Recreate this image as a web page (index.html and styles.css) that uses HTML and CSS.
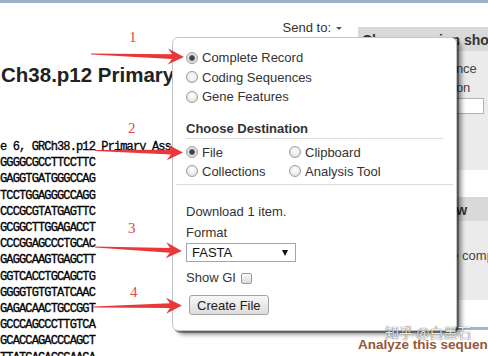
FILE: index.html
```html
<!DOCTYPE html>
<html lang="en">
<head>
<meta charset="utf-8">
<title>Nucleotide - Send to</title>
<link rel="stylesheet" href="styles.css">
</head>
<body>
<div class="topbar"></div>
<div class="page">
  <main class="content">
    <div class="toolbar"><span class="sendto">Send to:<span class="caret"></span></span></div>
    <h1 class="title">Ch38.p12 Primary Assembly</h1>
    <pre class="seq">e 6, GRCh38.p12 Primary Assembly
GGGGCGCCTTCCTTC
GAGGTGATGGGCCAG
TCCTGGAGGGCCAGG
CCCGCGTATGAGTTC
GCGGCTTGGAGACCT
CCCGGAGCCCTGCAC
GAGGCAAGTGAGCTT
GGTCACCTGCAGCTG
GGGGTGTGTATCAAC
GAGACAACTGCCGGT
GCCCAGCCCTTGTCA
GCACCAGACCCAGCT
TTATCACACCCAACA</pre>
  </main>
  <aside class="sidebar">
    <section class="portlet">
      <h2 class="portlet-head">Change region shown</h2>
      <div class="portlet-body region">
        <label class="opt"><input type="radio" class="radio" name="region" checked>Whole sequence</label>
        <label class="opt"><input type="radio" class="radio" name="region">Selected region</label>
        <div class="range">from:<input class="field" type="text"></div>
      </div>
    </section>
    <section class="portlet second">
      <h2 class="portlet-head">Customize view</h2>
      <div class="portlet-body custom">
        <label class="opt"><input type="checkbox" class="check">Show reverse complement</label>
      </div>
    </section>
    <section class="analyze">
      <h3 class="analyze-head">Analyze this sequence</h3>
    </section>
  </aside>
</div>

<div class="popup">
  <div class="pop-sec choices">
    <label class="row"><input type="radio" class="radio" name="rec" checked>Complete Record</label>
    <label class="row"><input type="radio" class="radio" name="rec">Coding Sequences</label>
    <label class="row"><input type="radio" class="radio" name="rec">Gene Features</label>
  </div>
  <div class="pop-sec dest">
    <h4 class="dest-head">Choose Destination</h4>
    <div class="dest-grid">
      <label class="row"><input type="radio" class="radio" name="dst" checked>File</label>
      <label class="row"><input type="radio" class="radio" name="dst">Clipboard</label>
      <label class="row"><input type="radio" class="radio" name="dst">Collections</label>
      <label class="row"><input type="radio" class="radio" name="dst">Analysis Tool</label>
    </div>
  </div>
  <div class="pop-sec file">
    <p class="line">Download 1 item.</p>
    <p class="line fmt">Format</p>
    <div class="select"><span>FASTA</span><span class="sel-arrow"></span></div>
    <label class="line gi">Show GI<input type="checkbox" class="check"></label>
    <button class="create" type="button">Create File</button>
  </div>
</div>

<svg class="annot" width="488" height="356" viewBox="0 0 488 356">
  <g class="arrow">
    <polygon transform="translate(91 54) rotate(1.85)" points="0,-0.6 81,-2.4 77,-8 93,0 77,8 81,2.4 0,0.6"/>
    <polygon transform="translate(95 150.5) rotate(1.3)" points="0,-0.6 76,-2.4 72,-8 88,0 72,8 76,2.4 0,0.6"/>
    <polygon transform="translate(95 247) rotate(2.63)" points="0,-0.6 75,-2.4 71,-8 87,0 71,8 75,2.4 0,0.6"/>
    <polygon transform="translate(93 307) rotate(-0.97)" points="0,-0.6 77,-2.4 73,-8 89,0 73,8 77,2.4 0,0.6"/>
  </g>
  <text class="num" x="129" y="42">1</text>
  <text class="num" x="128" y="133">2</text>
  <text class="num" x="128" y="233">3</text>
  <text class="num" x="130" y="297">4</text>
</svg>
<div class="watermark">知乎 @白墨石</div>
</body>
</html>
```
FILE: styles.css
```css
* { box-sizing: border-box; }
html, body { margin: 0; padding: 0; overflow: hidden; background: #fff; }
body {
  width: 488px;
  height: 356px;
  position: relative;
  font-family: "Liberation Sans", Arial, sans-serif;
  font-size: 13px;
  color: #333;
}

.topbar { height: 3px; background: #9db1c9; }

.page {
  display: grid;
  grid-template-columns: 358px 220px;
}

/* left content column */
.content { padding-top: 17px; min-width: 0; }
.toolbar {
  display: flex;
  justify-content: flex-end;
  padding-right: 16px;
  height: 15px;
  line-height: 15px;
}
.sendto { display: flex; align-items: center; gap: 5px; color: #333; }
.caret {
  width: 0; height: 0;
  border-left: 3px solid transparent;
  border-right: 3px solid transparent;
  border-top: 3px solid #555;
  margin-top: 2px;
}
.title {
  margin: 28px 0 0;
  padding-left: 1px;
  font-size: 20.5px;
  line-height: 24px;
  font-weight: bold;
  color: #222;
  white-space: nowrap;
}
.seq {
  margin: 52px 0 0;
  font-family: "Liberation Mono", "Courier New", monospace;
  font-size: 12px;
  letter-spacing: -0.87px;
  line-height: 16.2px;
  color: #000;
  -webkit-text-stroke: 0.3px #000;
  white-space: pre;
}

/* right sidebar */
.sidebar { padding-top: 24px; white-space: nowrap; }
.portlet-head {
  margin: 0;
  height: 24px;
  padding: 2px 0 0 4px;
  line-height: 22px;
  background: #d9d9d9;
  font-size: 14px;
  font-weight: bold;
  color: #333;
}
.portlet-body { background: #ebebeb; padding: 0 4px; color: #444; }
.region { height: 119px; padding-top: 7.5px; }
.second { margin-top: 27px; }
.custom { height: 79px; padding-top: 25px; }
.opt { display: flex; align-items: center; height: 19px; }
.opt .radio, .opt .check { margin-right: 6px; }
.range { display: flex; align-items: center; padding-left: 18px; margin-top: 1.5px; height: 16px; }
.field {
  width: 60px; height: 16px; margin: 0 0 0 14px; padding: 0;
  border: 1px solid #b3b3b3; background: #fff;
}
.analyze { margin-top: 27px; border-top: 3px solid #a3b6cd; padding-top: 7px; }
.analyze-head {
  margin: 0;
  font-size: 13.5px;
  line-height: 16px;
  font-weight: bold;
  color: #985735;
}

/* form controls */
.radio {
  -webkit-appearance: none;
  appearance: none;
  flex: none;
  width: 12px; height: 12px;
  margin: 0 4px 0 0;
  border-radius: 50%;
  border: 1px solid #9c9c9c;
  background: radial-gradient(circle at 50% 40%, #ffffff 0, #f0f0f0 45%, #d2d2d2 100%);
}
.radio:checked {
  background: radial-gradient(circle at 50% 50%, #333 0, #444 1.8px, #8c8c8c 2.8px, #e9e9e9 3.8px, #d4d4d4 100%);
}
.check {
  -webkit-appearance: none;
  appearance: none;
  flex: none;
  width: 11px; height: 11px;
  margin: 0;
  border: 1px solid #9a9a9a;
  border-radius: 2px;
  background: linear-gradient(#fbfbfb, #dcdcdc);
}

/* Send to popup */
.popup {
  position: absolute;
  left: 172px;
  top: 37px;
  width: 285px;
  padding: 0 3px;
  background: #fff;
  border: 1px solid #c4c4c4;
  border-radius: 6px;
  box-shadow: 2px 2px 0 0 rgba(0, 0, 0, 0.35), 5px 4px 5px -1px rgba(0, 0, 0, 0.5);
  color: #333;
}
.pop-sec { padding: 0 10px; }
.choices { padding-top: 10px; }
.row { display: flex; align-items: center; height: 19.5px; white-space: nowrap; }
.dest { padding-top: 14.5px; padding-bottom: 3.5px; border-bottom: 1px solid #dcdcdc; }
.dest-head {
  margin: 0;
  font-size: 13px;
  line-height: 16px;
  font-weight: bold;
  padding-bottom: 1px;
  border-bottom: 1px solid #dcdcdc;
}
.dest-grid {
  margin-top: 3.5px;
  display: grid;
  grid-template-columns: 103px auto;
}
.dest-grid .row { height: 19px; }
.file { padding-top: 19px; padding-bottom: 15px; }
.line { margin: 0; line-height: 16px; }
.fmt { margin-top: 5px; }
.select {
  margin-top: 2px;
  width: 110px;
  height: 19px;
  padding: 0 7px 0 5px;
  display: flex;
  align-items: center;
  justify-content: space-between;
  border: 1px solid #a6a6a6;
  background: #fff;
  color: #111;
}
.sel-arrow {
  width: 0; height: 0;
  border-left: 3.5px solid transparent;
  border-right: 3.5px solid transparent;
  border-top: 6px solid #111;
}
.gi { display: flex; align-items: center; gap: 5px; margin-top: 8px; height: 16px; }
.create {
  display: block;
  margin: 9px 0 0 3px;
  height: 20px;
  padding: 0 7px;
  border: 1px solid #a3a3a3;
  border-radius: 3px;
  background: linear-gradient(#f7f7f7, #dcdcdc);
  font-family: "Liberation Sans", Arial, sans-serif;
  font-size: 13px;
  color: #222;
}

/* annotation overlay */
.annot { position: absolute; left: 0; top: 0; pointer-events: none; }
.arrow polygon { fill: #e8383a; }
.num { font-family: "Liberation Serif", "Times New Roman", serif; font-size: 15px; fill: #dc4a4a; }

.watermark {
  position: absolute;
  left: 385px;
  top: 324px;
  font-family: "Noto Sans CJK SC", sans-serif;
  font-size: 14px;
  line-height: 16px;
  color: rgba(255, 255, 255, 0.9);
  text-shadow: 0 0 1px rgba(60, 60, 60, 0.8), 0 0 1px rgba(60, 60, 60, 0.6);
  white-space: nowrap;
}
```
